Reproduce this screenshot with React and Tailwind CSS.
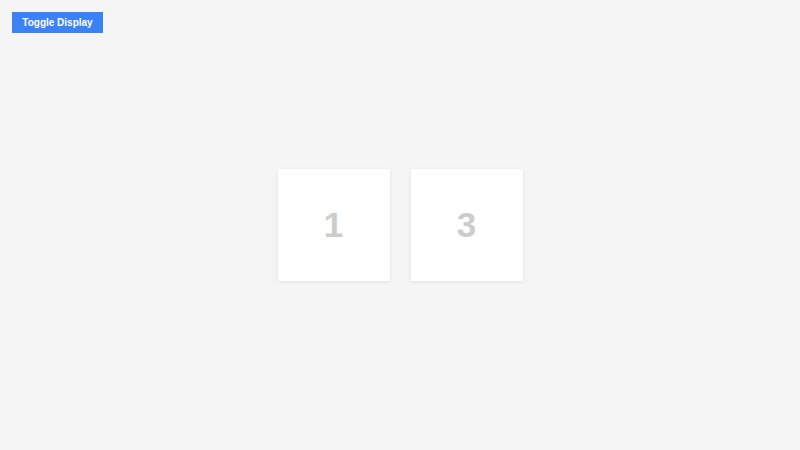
const Box = ({ n }) => (
    <div className="w-[112px] h-[112px] bg-white shadow-[0_1px_4px_rgba(0,0,0,0.08)] flex items-center justify-center">
        <span className="text-[35px] font-bold text-[#cccccc]">{n}</span>
    </div>
);

const App = () => {
    return (
        <div className="relative h-screen w-full bg-[#f5f5f5] font-['Liberation_Sans',Arial,sans-serif]">
            <button className="absolute top-3 left-3 w-[91px] h-[21px] bg-[#3b82f6] text-white text-[10px] font-bold leading-none">
                Toggle Display
            </button>
            <div className="h-full flex items-center justify-center gap-[21px]">
                <Box n={1} />
                <Box n={3} />
            </div>
        </div>
    );
};

export default App;
